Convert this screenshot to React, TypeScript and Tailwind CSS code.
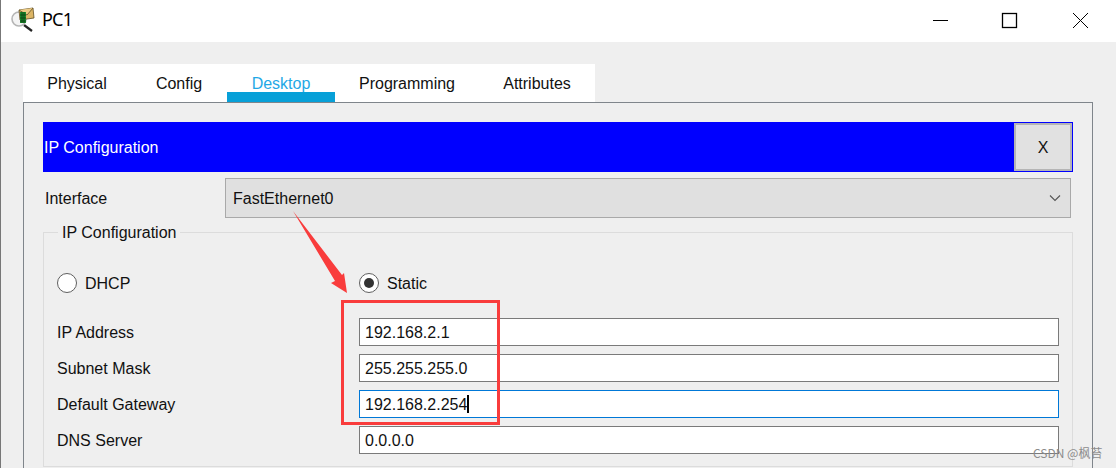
const fields = [
  { label: "IP Address", value: "192.168.2.1" },
  { label: "Subnet Mask", value: "255.255.255.0" },
  { label: "Default Gateway", value: "192.168.2.254", focused: true },
  { label: "DNS Server", value: "0.0.0.0" },
];

const tabs = [
  { name: "Physical", width: "w-[108px]" },
  { name: "Config", width: "w-[96px]" },
  { name: "Desktop", width: "w-[108px]", active: true },
  { name: "Programming", width: "w-[144px]" },
  { name: "Attributes", width: "w-[116px]" },
];

// PC icon from the title bar: envelope under a magnifier
const PcIcon = () => (
  <svg width="26" height="26" viewBox="0 0 26 26" className="mb-[2px]">
    <path d="M14 18l8 6" stroke="#222" strokeWidth="2.200" />
    <circle cx="9" cy="12" r="7" fill="#f4f4f4" stroke="#b5b5b5" strokeWidth="1.600" />
    <path d="M9 3l14-2 1 10-14 2z" fill="#dcb565" stroke="#5e4c22" strokeWidth="0.800" />
    <path d="M9 3l8 5 6-7" fill="#eccb85" stroke="#5e4c22" strokeWidth="0.800" />
    <path d="M10 5h6v11h-6z" fill="#1d8a2e" />
    <path d="M12 5v11M14 5v11M10 8h6M10 11h6M10 14h6" stroke="#0a3a10" strokeWidth="0.700" />
  </svg>
);

const Radio = ({ label, checked }: { label: string; checked?: boolean }) => (
  <div className="flex items-center gap-[8px]">
    <span className="flex h-[20px] w-[20px] items-center justify-center rounded-full border border-[#5f5f5f] bg-white">
      {checked && <span className="h-[10px] w-[10px] rounded-full bg-[#333333]" />}
    </span>
    <span className="pt-[2px]">{label}</span>
  </div>
);

export default function App() {
  return (
    <div className="relative h-[468px] w-[1116px] overflow-hidden border-l border-[#777777] bg-[#efefef] font-['Liberation_Sans',Arial,sans-serif] text-[16px] leading-[18px] text-[#111111]">
      {/* title bar */}
      <div className="flex h-[42px] items-center bg-white">
        <div className="ml-[9px] flex items-center gap-[6px]">
          <PcIcon />
          <span className="pb-[4px] font-['Noto_Sans',sans-serif] text-[18px] tracking-[-0.8px] text-black">PC1</span>
        </div>
        <div className="ml-auto mr-[5px] flex items-center">
          <svg width="70" height="40" viewBox="0 0 70 40">
            <path d="M32 19.500h15" stroke="#000" strokeWidth="1" />
          </svg>
          <svg width="70" height="40" viewBox="0 0 70 40">
            <rect x="31.500" y="12.500" width="14" height="14" fill="none" stroke="#000" strokeWidth="1.300" />
          </svg>
          <svg width="70" height="40" viewBox="0 0 70 40">
            <path d="M32 12l15 15M47 12l-15 15" stroke="#000" strokeWidth="1" />
          </svg>
        </div>
      </div>

      <div className="ml-[22px] mt-[22px]">
        {/* tabs */}
        <div className="flex h-[38px] w-[572px] bg-white">
          {tabs.map((tab) => (
            <div
              key={tab.name}
              className={`flex h-[38px] items-start justify-center pt-[11px] ${tab.width} ${
                tab.active ? "border-b-[10px] border-[#07a0d8] text-[#1fa8e6]" : ""
              }`}
            >
              {tab.name}
            </div>
          ))}
        </div>

        {/* desktop panel */}
        <div className="h-[400px] w-[1070px] border-l border-t border-r border-[#7f858b] pl-[19px] pt-[19px]">
          <div className="flex h-[50px] w-[1030px] items-center justify-between border border-[#0000ff] bg-[#0000ff] text-white">
            <span className="pt-[2px]">IP Configuration</span>
            <button className="flex h-[48px] w-[58px] items-center justify-center border-2 border-[#b5b5b5] bg-[#e1e1e1] pt-[2px] text-[#111111]">
              X
            </button>
          </div>

          <div className="mt-[6px] flex h-[40px] w-[1028px] items-center">
            <span className="ml-[2px] w-[180px] pt-[2px]">Interface</span>
            <div className="flex h-[40px] flex-1 items-center justify-between border border-[#a9a9a9] bg-[#e0e0e0] pl-[7px] pr-[9px]">
              <span className="pt-[2px]">FastEthernet0</span>
              <svg width="12" height="8" viewBox="0 0 12 8">
                <path d="M1 1.500l5 5 5-5" fill="none" stroke="#555" strokeWidth="1.100" />
              </svg>
            </div>
          </div>

          <fieldset className="mt-[4px] h-[245px] w-[1030px] border border-[#dcdcdc] pl-[13px]">
            <legend className="ml-[1px] px-[4px] pt-[2px]">IP Configuration</legend>
            <div className="mt-[31px] flex h-[20px] items-center">
              <div className="w-[302px]">
                <Radio label="DHCP" />
              </div>
              <Radio label="Static" checked />
            </div>
            <div className="mt-[25px] flex w-[1002px] flex-col gap-[8px]">
              {fields.map((field) => (
                <div key={field.label} className="flex h-[28px] items-center">
                  <span className="w-[302px] pt-[2px]">{field.label}</span>
                  <div
                    className={`flex h-[28px] flex-1 items-center bg-white px-[5px] ${
                      field.focused ? "border border-[#0078d7]" : "border border-[#7a7a7a]"
                    }`}
                  >
                    <span className="pt-[2px]">{field.value}</span>
                    {field.focused && <span className="h-[18px] w-[2px] bg-black" />}
                  </div>
                </div>
              ))}
            </div>
          </fieldset>
        </div>
      </div>

      {/* red annotations over the screenshot */}
      <svg width="1116" height="468" viewBox="0 0 1116 468" className="pointer-events-none absolute left-[-1px] top-0">
        <polygon points="293,211 342,275 344,273 347,293 331,283 335,281" fill="#f93c3c" />
      </svg>
      <div className="pointer-events-none absolute left-[340px] top-[300px] h-[125px] w-[159px] border-[3px] border-[#f93c3c]" />

      {/* watermark */}
      <span className="absolute left-[1032px] top-[446px] font-['Noto_Sans_CJK_SC',sans-serif] text-[12px] leading-[14px] text-[#8c8c8c]">
        CSDN @枫苔
      </span>
    </div>
  );
}
